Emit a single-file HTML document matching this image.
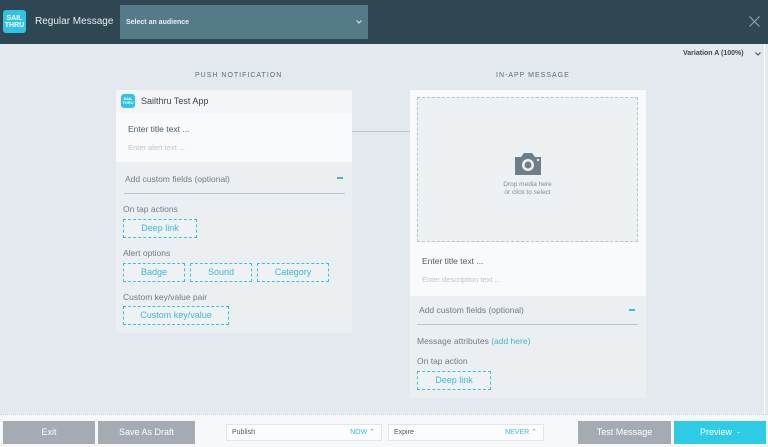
<!DOCTYPE html>
<html><head><meta charset="utf-8"><style>
*{box-sizing:border-box;margin:0;padding:0}
body{width:768px;height:447px;overflow:hidden;background:#e3e9ef;font-family:"Liberation Sans",sans-serif;position:relative;color:#4a5a66}
.a{position:absolute}
.hdr{left:0;top:0;width:768px;height:44px;background:#2f4753}
.logo{background:#2ec4e6;color:#fff;font-weight:bold;text-align:center;border-radius:3px;line-height:1}
.btn{position:absolute;border:1px dashed #3cc3dc;color:#3cb9d6;font-size:9px;text-align:center;line-height:17px;height:19px;background:#eef2f5}
.lbl{position:absolute;font-size:8.5px;color:#6f7c86}
.fb{position:absolute;top:421px;height:23px;background:#a4abb2;color:#fff;font-size:9px;text-align:center;line-height:23px}
.sel{position:absolute;top:424px;height:17px;border:1px solid #e1e6ea;background:#fbfcfd;font-size:7px;line-height:15px;padding-left:5px;color:#556}
.minus{position:absolute;width:6px;height:1.5px;background:#3cb9d6}
</style></head><body>
<div class="a hdr"></div>
<div class="a logo" style="left:3px;top:10px;width:23px;height:23px;font-size:7px;padding-top:5px">SAIL<br>THRU</div>
<div class="a" style="left:35px;top:16px;color:#e8eef1;font-size:10px">Regular Message</div>
<div class="a" style="left:120px;top:5px;width:248px;height:34px;background:#567b88"></div>
<div class="a" style="left:126px;top:19px;color:#eef;font-size:7px;font-weight:bold">Select an audience</div>
<svg class="a" style="left:356px;top:20px" width="6" height="4" viewBox="0 0 6 4"><path d="M0.5 0.5L3 3L5.5 0.5" stroke="#dde" stroke-width="1.2" fill="none"/></svg>
<svg class="a" style="left:749px;top:16px" width="11" height="11" viewBox="0 0 11 11"><path d="M0.5 0.5L10.5 10.5M10.5 0.5L0.5 10.5" stroke="#8fa3ad" stroke-width="1.2"/></svg>

<div class="a" style="left:683px;top:50px;font-size:7px;color:#445;font-weight:bold">Variation A (100%)</div>
<svg class="a" style="left:755px;top:52px" width="6" height="4" viewBox="0 0 6 4"><path d="M0.5 0.5L3 3L5.5 0.5" stroke="#556" stroke-width="1.2" fill="none"/></svg>
<div class="a" style="left:764px;top:44px;width:1px;height:370px;background:#fff"></div>

<div class="a" style="left:195px;top:72px;font-size:7px;letter-spacing:1px;color:#5d6d78">PUSH NOTIFICATION</div>
<div class="a" style="left:496px;top:72px;font-size:7px;letter-spacing:1px;color:#5d6d78">IN-APP MESSAGE</div>

<div class="a" style="left:352px;top:131px;width:58px;height:1px;background:#b9c8d0"></div>

<div class="a" style="left:116px;top:90px;width:236px;height:243px;background:#ebeff2"></div>
<div class="a" style="left:116px;top:90px;width:236px;height:23px;background:#f3f5f7"></div>
<div class="a" style="left:116px;top:113px;width:236px;height:49px;background:#f8fafc"></div>
<div class="a logo" style="left:121px;top:94px;width:14px;height:14px;font-size:4px;padding-top:3px">SAIL<br>THRU</div>
<div class="a" style="left:141px;top:96px;font-size:9px;color:#445">Sailthru Test App</div>
<div class="a" style="left:128px;top:124px;font-size:8.5px;color:#4f5d68">Enter title text ...</div>
<div class="a" style="left:128px;top:143px;font-size:7.5px;color:#bcc7ce">Enter alert text ...</div>
<div class="lbl" style="left:125px;top:174px">Add custom fields (optional)</div>
<div class="minus" style="left:337px;top:177px"></div>
<div class="a" style="left:124px;top:193px;width:221px;height:1px;background:#b9c8d0"></div>
<div class="lbl" style="left:123px;top:204px">On tap actions</div>
<div class="btn" style="left:123px;top:219px;width:74px">Deep link</div>
<div class="lbl" style="left:123px;top:248px">Alert options</div>
<div class="btn" style="left:123px;top:263px;width:62px">Badge</div>
<div class="btn" style="left:190px;top:263px;width:62px">Sound</div>
<div class="btn" style="left:257px;top:263px;width:72px">Category</div>
<div class="lbl" style="left:123px;top:292px">Custom key/value pair</div>
<div class="btn" style="left:123px;top:306px;width:106px">Custom key/value</div>

<div class="a" style="left:410px;top:90px;width:236px;height:308px;background:#ebeff2"></div>
<div class="a" style="left:410px;top:90px;width:236px;height:206px;background:#f8fafc"></div>
<div class="a" style="left:417px;top:97px;width:221px;height:145px;border:1px dashed #b9c5cc;background:#eef1f4"></div>
<svg class="a" style="left:513px;top:151px" width="30" height="26" viewBox="0 0 30 26"><path d="M2 6h6l3-4h8l3 4h6v18H2z" fill="#6f7f89"/><circle cx="15" cy="14" r="6" fill="#eef1f4"/><circle cx="15" cy="14" r="3.5" fill="#6f7f89"/><circle cx="25" cy="9" r="1.2" fill="#eef1f4"/></svg>
<div class="a" style="left:417px;top:181px;width:221px;text-align:center;font-size:6.5px;line-height:8px;color:#7d8d97">Drop media here<br>or click to select</div>
<div class="a" style="left:422px;top:256px;font-size:8.5px;color:#4f5d68">Enter title text ...</div>
<div class="a" style="left:422px;top:275px;font-size:7.5px;color:#bcc7ce">Enter description text ...</div>
<div class="lbl" style="left:419px;top:305px">Add custom fields (optional)</div>
<div class="minus" style="left:629px;top:309px"></div>
<div class="a" style="left:417px;top:324px;width:221px;height:1px;background:#b9c8d0"></div>
<div class="lbl" style="left:417px;top:336px">Message attributes <span style="color:#3cb9d6">(add here)</span></div>
<div class="lbl" style="left:417px;top:356px">On tap action</div>
<div class="btn" style="left:417px;top:371px;width:74px">Deep link</div>

<div class="a" style="left:0;top:414px;width:768px;height:33px;background:#f6f8fa;border-top:1px dotted #c8d2d9"></div>
<div class="fb" style="left:3px;width:92px">Exit</div>
<div class="fb" style="left:98px;width:97px">Save As Draft</div>
<div class="sel" style="left:226px;width:156px">Publish<span style="position:absolute;right:6px;color:#3cb9d6">NOW <span style="color:#889">⌃</span></span></div>
<div class="sel" style="left:388px;width:156px">Expire<span style="position:absolute;right:6px;color:#3cb9d6">NEVER <span style="color:#889">⌃</span></span></div>
<div class="fb" style="left:578px;width:93px">Test Message</div>
<div class="fb" style="left:674px;width:92px;background:#2ecbe7">Preview &nbsp;-</div>
</body></html>
